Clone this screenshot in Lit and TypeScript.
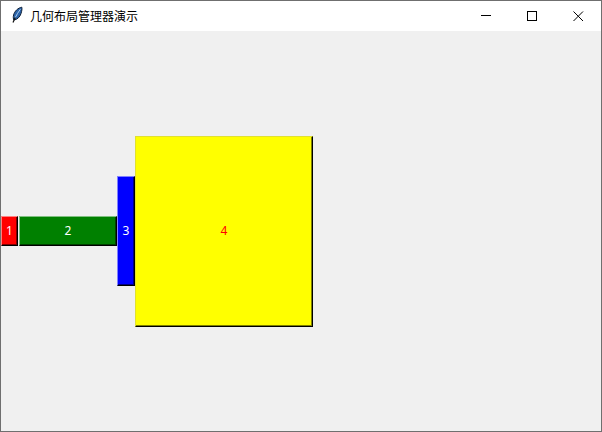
import { LitElement, html, css, svg } from "lit";
import { customElement } from "lit/decorators.js";

const feather = svg`<svg class="feather" width="16" height="20" viewBox="0 0 16 20" aria-hidden="true">
  <path d="M13.8 1.2 C10.2 1.8 6.6 5 5.6 9 C5.1 11 5.2 12.8 5.9 14 C9.4 13.6 12 10.8 13 7.6 C13.8 5 14.2 2.9 13.8 1.2 Z" fill="#2a62a8" stroke="#0e2038" stroke-width="1"/>
  <path d="M12.4 3.2 C10.4 6 8.6 8.8 7.2 11.6" fill="none" stroke="#a9cbec" stroke-width="1"/>
  <path d="M7.2 11.4 L5 16.4" fill="none" stroke="#111" stroke-width="1.2"/>
</svg>`;

@customElement("app-root")
export class AppRoot extends LitElement {
  static styles = css`
    :host {
      display: block;
      width: 602px;
      height: 432px;
      box-sizing: border-box;
      border: 1px solid #6f6f6f;
      background: #f0f0f0;
      font-family: "Noto Sans", "Noto Sans CJK SC", sans-serif;
      overflow: hidden;
    }
    .titlebar {
      height: 30px;
      background: #fff;
      display: flex;
      align-items: center;
      padding-left: 7px;
    }
    .feather { flex: none; }
    .title {
      margin-left: 6px;
      font: 12px/16px "Noto Sans CJK SC", "Noto Sans", sans-serif;
      color: #000;
      flex: 1;
      white-space: nowrap;
    }
    .ctl {
      width: 46px;
      height: 30px;
      display: flex;
      align-items: center;
      justify-content: center;
      flex: none;
    }
    .ctl svg { display: block; }
    .stage {
      height: 400px;
      display: flex;
      align-items: center;
    }
    .box {
      box-sizing: border-box;
      display: flex;
      align-items: center;
      justify-content: center;
      font-size: 12px;
      line-height: 16px;
      flex: none;
      border-style: solid;
      border-width: 1px;
    }
    .b1 { width: 17px; height: 30px; background: #f00; color: #fff; border-color: #ff8080 #000 #000 #ff8080; box-shadow: inset -1px -1px 0 #800000; }
    .b2 { width: 98px; height: 30px; margin-left: 1px; background: #008000; color: #fff; border-color: #80c080 #000 #000 #80c080; box-shadow: inset -1px -1px 0 #004000; }
    .b3 { width: 18px; height: 110px; background: #00f; color: #fff; border-color: #8080ff #000 #000 #8080ff; box-shadow: inset -1px -1px 0 #000080; }
    .b4 { width: 178px; height: 191px; background: #ff0; color: #f00; border-color: #e0e030 #000 #000 #e0e030; box-shadow: inset -1px -1px 0 #808000; }
  `;

  render() {
    return html`
      <div class="titlebar">
        ${feather}
        <span class="title">几何布局管理器演示</span>
        <div class="ctl"><svg width="11" height="11" viewBox="0 0 11 11"><path d="M0 4.5H10" stroke="#000" stroke-width="1"/></svg></div>
        <div class="ctl"><svg width="11" height="11" viewBox="0 0 11 11"><rect x="0.5" y="0.5" width="9" height="9" fill="none" stroke="#000"/></svg></div>
        <div class="ctl"><svg width="11" height="11" viewBox="0 0 11 11"><path d="M0.5 0.5L10 10M10 0.5L0.5 10" stroke="#000" stroke-width="1"/></svg></div>
      </div>
      <div class="stage">
        <div class="box b1">1</div>
        <div class="box b2">2</div>
        <div class="box b3">3</div>
        <div class="box b4">4</div>
      </div>
    `;
  }
}
